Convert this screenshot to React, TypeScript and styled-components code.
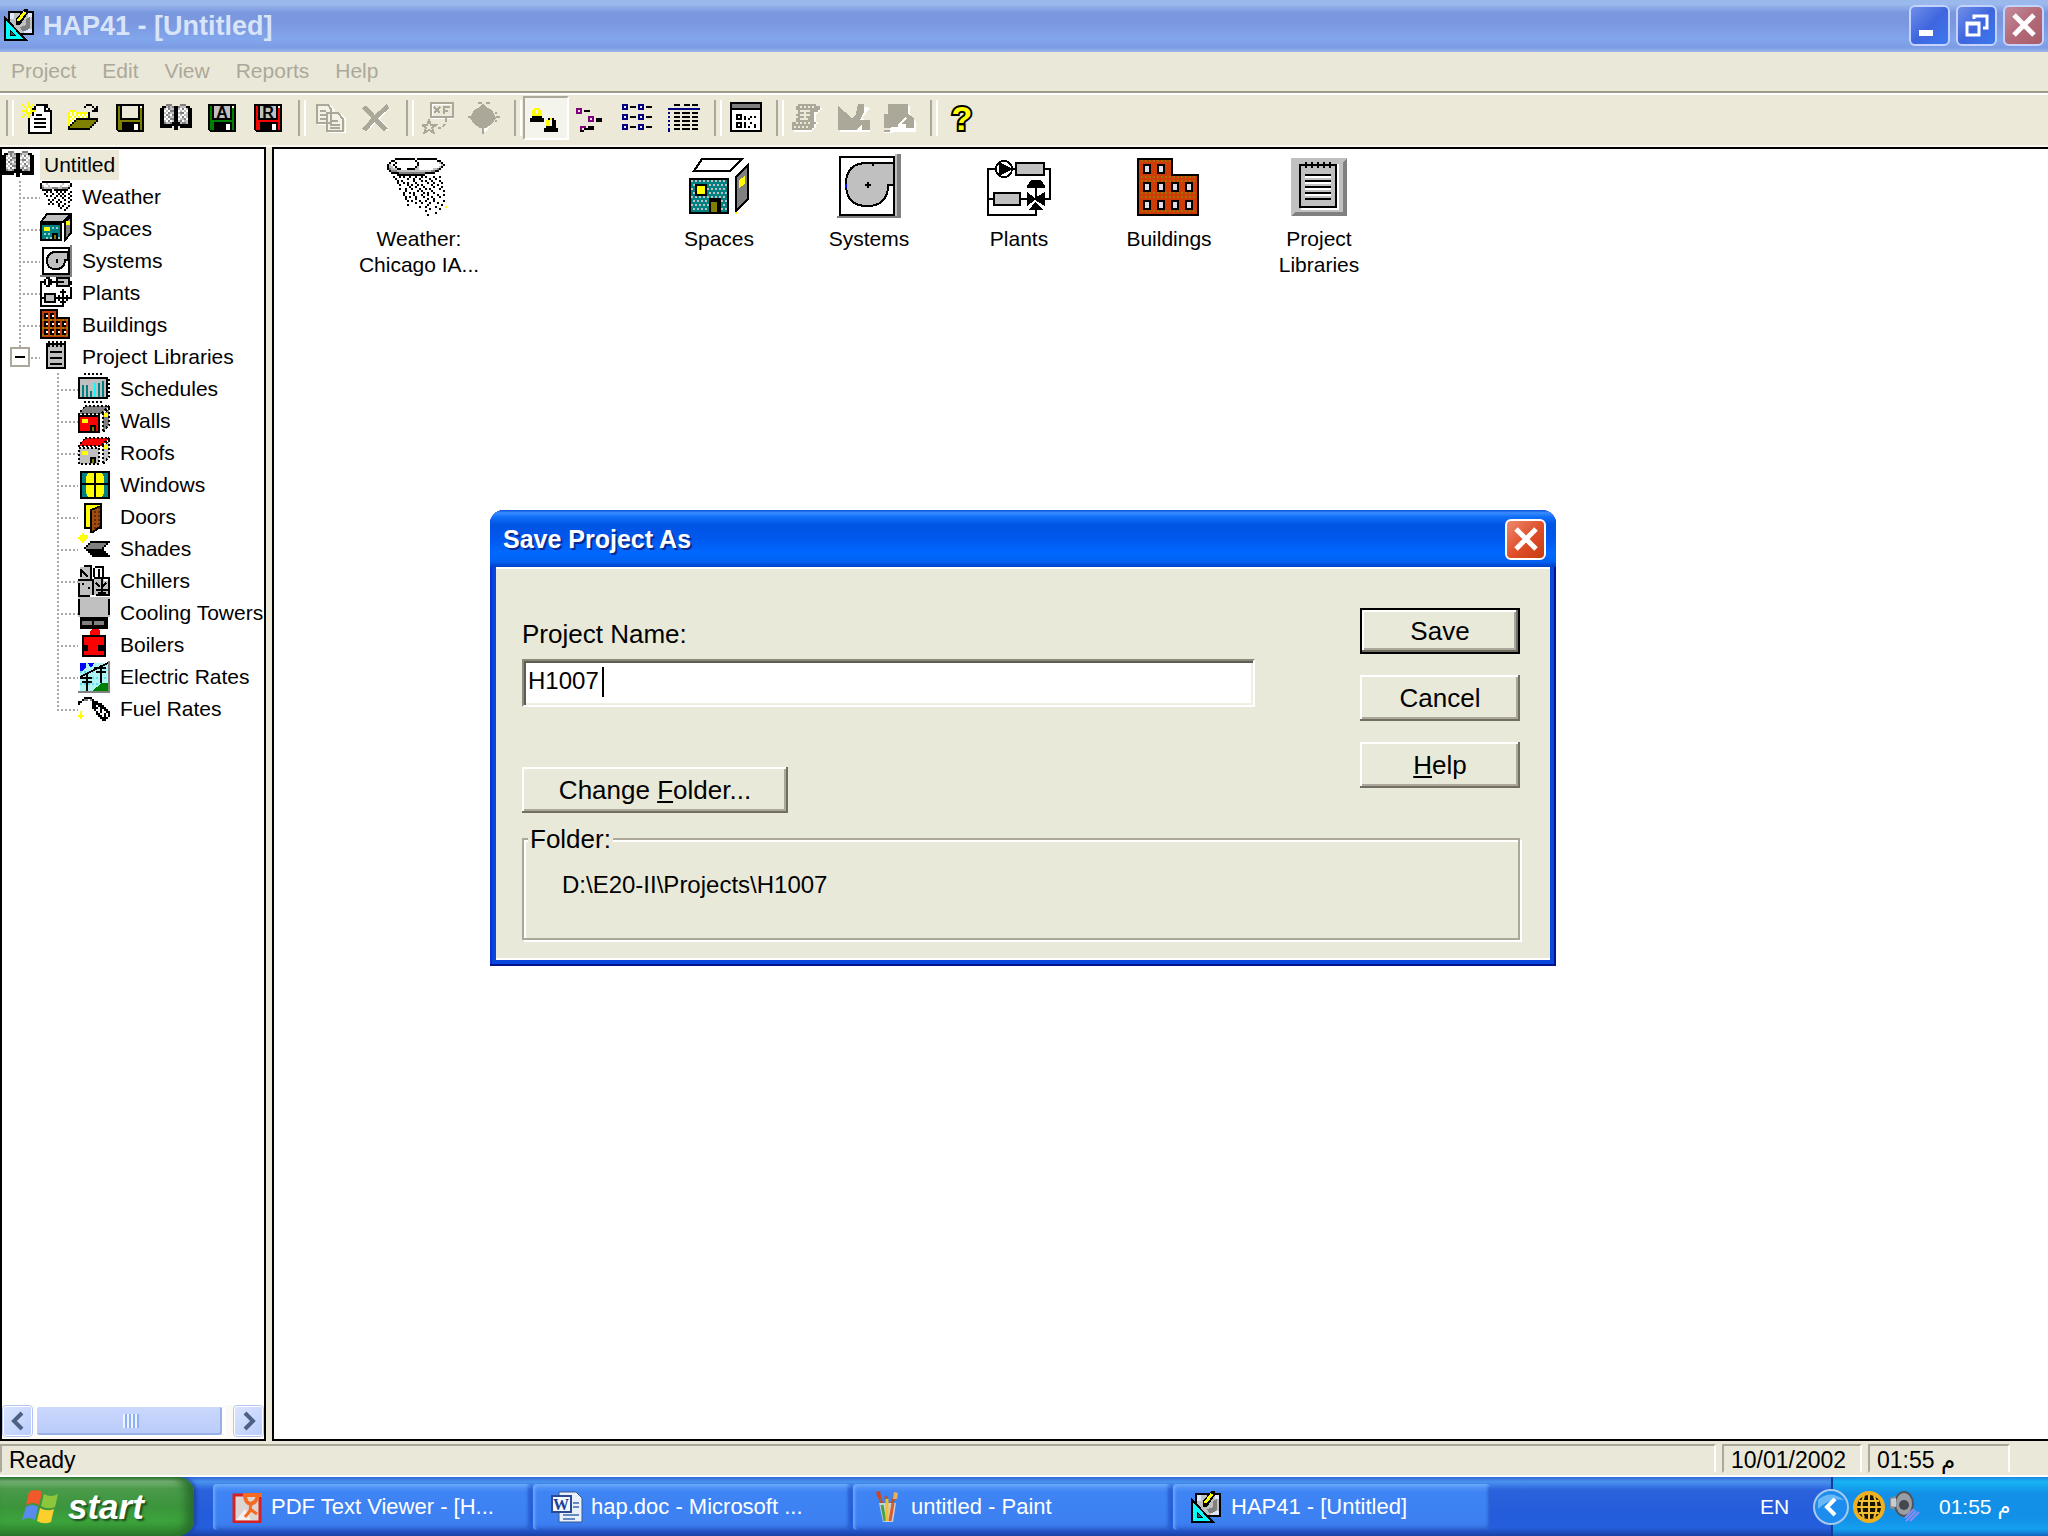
import React from "react";
import styled, { createGlobalStyle, css } from "styled-components";

const face = '#ece9d8';
const uiFont = '"Liberation Sans", "DejaVu Sans", Arial, sans-serif';

const GlobalStyle = createGlobalStyle`
  * { box-sizing: border-box; }
  body { margin: 0; background: ${face}; color: #000; font-family: ${uiFont}; }
  button { font: inherit; color: inherit; margin: 0; padding: 0; border: 0; background: none; }
  ul { list-style: none; margin: 0; padding: 0; }
  svg { display: block; flex: none; }
`;

/* ---------- drawing helpers ---------- */

const inks: Record<string, string> = {
  "#": "#000", w: "#fff", g: "#c0c0c0", d: "#808080", y: "#ff0", r: "#f00", t: "#008080",
  c: "#0ff", o: "#808000", G: "#008000", b: "#00f", n: "#000080", p: "#800080", s: "#aca899",
};

const Icon = ({ size = 32, box = 16, children }: { size?: number; box?: number; children: React.ReactNode }) => (
  <svg width={size} height={size} viewBox={`0 0 ${box} ${box}`} fill="none" aria-hidden="true" shapeRendering="crispEdges">
    {children}
  </svg>
);

const Pixels = ({ rows, top = 0 }: { rows: string[]; top?: number }) => (
  <>
    {rows.flatMap((row, y) =>
      Array.from(row.matchAll(/([^.])\1*/g)).map((run) => (
        <rect key={`${y}-${run.index}`} x={run.index} y={y + top} width={run[0].length} height={1} fill={inks[run[1]]} />
      ))
    )}
  </>
);

const bitmap = (rows: string[], top = 0) => <Icon><Pixels rows={rows} top={top} /></Icon>;

/* ---------- toolbar icons ---------- */

const AppIcon = ({ size = 32 }: { size?: number }) => (
  <Icon size={size}>
    <path d="M2 1H15V13H2Z" fill="#000" />
    <path d="M3 2H14V12H3Z" fill="#c0c0c0" />
    <path d="M3 2H5V5H3ZM12 2H14V4H12ZM10 10H14V12H10Z" fill="#dfe8ff" />
    <path d="M13 4V8Q13 11 9 11L8 9L11 8V5Z" fill="#808080" />
    <path d="M10 0H12V2L8 8H6V5Z" fill="#000" />
    <path d="M10.500 1.500L7 6" stroke="#ff0" strokeWidth="1.500" />
    <path d="M.5 4.500V15.500H11Z" fill="#0ff" stroke="#000" />
    <path d="M3 10.500V13H5.500Z" fill="#356" stroke="#000" strokeWidth=".5" />
  </Icon>
);

const newIcon = bitmap([
  "...y...........",
  "y..y.y.######..",
  ".y.yy.#wwww##..",
  "..ywy##wwww#w#.",
  "yyywyyywwww####",
  "..yyy#wwwwwwww#",
  ".y.y.#w###wwww#",
  "y..y.wwwwwwwww#",
  "...#ww######ww#",
  "...#wwwwwwwwww#",
  "...#ww######ww#",
  "...#wwwwwwwwww#",
  "...#ww######ww#",
  "...#wwwwwwwwww#",
  "...#wwwwwwwwww#",
  "...############",
]);
const openIcon = bitmap([
  ".........###....",
  "........#...#.#.",
  ".............##.",
  ".yyy........###.",
  "ywywyyyyyy#.....",
  "ywywywywyw#.....",
  "yywywywywy#.....",
  "ywyw###########.",
  "yyw#oooooooooo#.",
  "yw#oooooooooo#..",
  "y#oooooooooo#...",
  "#oooooooooo#....",
  "###########.....",
], 1);

const Floppy = ({ color, letter }: { color: string; letter?: string }) => (
  <Icon>
    <path d="M1 1H15V15H2L1 14Z" fill="#000" />
    <path d="M2 2H14V14H2Z" fill={color} />
    <path d="M3 1H13V9H3Z" fill="#000" />
    <path d="M4 2H12V8H4Z" fill={letter ? "#c0c0c0" : "#ece9d8"} />
    <path d="M13 2H14V3H13Z" fill="#fff" />
    <path d="M4 10H13V15H4Z" fill="#000" />
    <path d="M10 11H12V14H10Z" fill="#fff" />
    {letter && (
      <text x="8" y="8" fontSize="8" fontWeight="700" textAnchor="middle" fill="#000" fontFamily="Liberation Sans, sans-serif">
        {letter}
      </text>
    )}
  </Icon>
);

const bookIcon = bitmap([
  "...ddd....ddd...",
  ".##gdgd##dggg##.",
  "##gwdgg##gwdwg##",
  "##wgwdd##wgwgw##",
  "##gwdgg##gddwg##",
  "##wdgwd##wgwgg##",
  "##gwdgg##gwdwg##",
  "##wgwdd##wggdw##",
  "##gwdwg##gdwgg##",
  "##dggd####gddg##",
  "################",
  "######.##.######",
  ".......##.......",
], 1);

const copyIcon = (
  <Icon>
    <path d="M2 2H8L10 4V11H2ZM8 6H13L16 9V15H8Z" stroke="#fff" />
    <path d="M1.500 1.500H7L8.500 3.500V10.500H1.500ZM6.500 5.500H12L14.500 8.500V14.500H6.500Z" fill="#f4f2e6" stroke="#aca899" />
    <path d="M3 4.500H6M3 6.500H6M3 8.500H6M8 9.500H12M8 11.500H13M8 13H13" stroke="#aca899" />
  </Icon>
);
const deleteIcon = (
  <Icon>
    <path d="M3 3L14 14M14 3L3 14" stroke="#fff" strokeWidth="1.500" />
    <path d="M2 2.500L13 14M14 2L7.500 8L2 14" stroke="#aca899" strokeWidth="2.400" />
  </Icon>
);
const replaceIcon = (
  <Icon>
    <path d="M5 1H16V8H5Z" stroke="#fff" />
    <path d="M4.500 .5H15.500V7.500H4.500Z" stroke="#aca899" />
    <path d="M6 2.500L9 5.500M9 2.500L6 5.500M11 6V2.500H14M11 4.500H13" stroke="#aca899" />
    <path d="M12 8Q12 13 8 13" stroke="#aca899" strokeDasharray="2 1" />
    <path d="M3.500 9L4.500 11.500H7L5 13L6 15.500L3.500 14L1 15.500L2 13L0 11.500H2.500Z" stroke="#aca899" />
  </Icon>
);
const rotateIcon = (
  <Icon>
    <path d="M8 2L14 8L9 15L2 9Z" fill="#fff" />
    <path d="M7.500 1L10 3L12 4L14 8L12 11L9 13L6 13L3 11L1 8L3 4L5 3Z" fill="#aca899" />
    <path d="M5 .5H7M9 .5H11M0 7.500H2M14 7.500H16M7.500 13V16M14 5V6M14 9V10" stroke="#aca899" />
  </Icon>
);
const largeIcons = bitmap([
  "..yyy...........",
  ".yy.yy..........",
  ".yy.yy..........",
  ".yyyyy..........",
  ".#####..........",
  "#######..#y#....",
  "#######.yy.##...",
  "........yy.##...",
  "........yy.##...",
  "........#####...",
  ".......#######..",
  ".......#######..",
], 3);
const smallIcons = bitmap([
  "ppp.............",
  "p.p.###.........",
  "ppp.............",
  "................",
  "......ppp.......",
  "......p.p.###...",
  "......ppp.###...",
  "................",
  "................",
  "..ppp.###.......",
  "..p.#####.......",
  "..##............",
], 3);
const listIcon = (
  <Icon>
    {[2, 7, 12].map((y) => (
      <g key={y}>
        <path d={`M.5 ${y - 0.5}h2v2h-2zM8.500 ${y - 0.5}h2v2h-2z`} stroke="#000080" />
        <path d={`M4 ${y + 0.5}h3M12 ${y + 0.5}h3`} stroke="#000" />
      </g>
    ))}
  </Icon>
);
const detailsIcon = (
  <Icon>
    <path d="M3 1.500H6M8 1.500H11M12 1.500H15" stroke="#000" />
    <path d="M0 3.500H16M.5 5V15" stroke="#000080" />
    <path d="M0 6.500H1M0 8.500H1M0 10.500H1M0 12.500H1" stroke={face} />
    {[5.5, 7.5, 9.5, 11.5, 13.5].map((y) => <path key={y} d={`M3 ${y}H6M7 ${y}H11M12 ${y}H15`} stroke="#000" />)}
  </Icon>
);
const preferencesIcon = (
  <Icon>
    <path d="M.5 .5H15.500V14.500H.5Z" fill="#fff" stroke="#000" />
    <path d="M1 1H15V3H1Z" fill="#808080" />
    <path d="M1 3.500H15M3.500 6.500H5.500V8.500H3.500ZM3.500 10.500H5.500V12.500H3.500Z" stroke="#000" />
    <path d="M7.500 7V9M9 8.500H10M10.500 7V8M12 7.500H13M7.500 10V13M9 12.500H10M10 10.500H11M12 12.500H13M12.500 11V13" stroke="#000" />
  </Icon>
);
const reportIcon = bitmap([
  "...sssssssss....",
  "..ss.s.s.s.sss..",
  "..ssssssssssssw.",
  "...s.....ssssw..",
  "...sss.ssssww...",
  "..ss.....ssw....",
  "...sss.ssssw....",
  "..ss....sssw....",
  "..sssssssssw....",
  "ss.s.s.s.sssw...",
  "sssssssssssw....",
  "s.s.s.s.sssw....",
  "ssssssssssw.....",
  ".wwwwwwwww......",
], 1);
const chartIcon = (
  <Icon>
    <path d="M1 3L9 11L12 5V2L16 3L12 8L16 11V15H1Z" fill="#fff" />
    <path d="M0 2L7 8L9 6L10 1H13V5L11 9H16V14H12V11L9 14H0Z" fill="#aca899" />
  </Icon>
);
const printIcon = (
  <Icon>
    <path d="M3 2H13V7L16 10V15H3V10L0 11Z" fill="#fff" />
    <path d="M2 1H12V6L15 8V13H11V11H7V13H0V6H2Z" fill="#aca899" />
    <path d="M0 15H4V13H8V11L11 8" stroke="#fff" />
    <path d="M0 14.500H3" stroke="#aca899" />
  </Icon>
);
const helpIcon = (
  <Icon size={44} box={22}>
    <text x="11" y="17" fontSize="17" fontWeight="700" textAnchor="middle" fill="#ff0" stroke="#000" strokeWidth="2" paintOrder="stroke" fontFamily="Liberation Sans, sans-serif">?</text>
  </Icon>
);

/* ---------- project item icons ---------- */

const weatherIcon = bitmap([
  ".##############.",
  "#wwgwwwwwwwgwww#",
  "#gwwgwwwwwgwwwg#",
  "#dggggdddggddd#.",
  ".#####.#######..",
  "...#.#..#.#.#..#",
  "..#...#..#.#..#.",
  "...#.#..#.#.#..#",
  ".......#...#..#.",
  "....#.#..#..#..#",
  ".....#..#.#...#.",
  "....#.#..#..#...",
  ".........#.#..#.",
  "..........#..#..",
  "............#...",
]);

const SmallHouse = ({ wall, roof, side = "#808080", dashed }: { wall: string; roof: string; side?: string; dashed?: boolean }) => (
  <Icon>
    <path d="M3.500 .5H15.500L11.500 4.500H.5Z" fill={roof} stroke="#000" strokeDasharray={dashed ? "1 1" : undefined} />
    <path d="M12.500 4.500L15.500 1.500V10L12.500 13.500Z" fill={side} stroke="#000" strokeDasharray={dashed ? "1 1" : undefined} />
    <path d="M.5 5.500H10.500V13.500H.5Z" fill={wall} stroke="#000" strokeDasharray={wall === "#c0c0c0" ? "1 1" : undefined} />
    {wall === "#008080" && <path d="M2 7.500H10M2 10.500H10M3 12.500H10" stroke="#9cc" strokeDasharray="1 1" />}
    <path d="M2 7H5V9H2ZM13 4H15V6H13Z" fill="#ff0" />
    <path d="M6 10H9V13H6Z" fill="#000" />
    <path d="M7 11H8V13H7Z" fill="#808000" />
  </Icon>
);

const systemsSmall = (
  <Icon>
    <path d="M0 15.500H15.500V0" stroke="#808080" />
    <path d="M1.500 1.500H14.500V14.500H1.500Z" fill="#fff" stroke="#000" />
    <path d="M8 3.500H14V7.500H12.500Q12.500 12 8 12Q3.500 12 3.500 8Q3.500 3.500 8 3.500Z" fill="#c0c0c0" stroke="#000" />
    <path d="M8 7H9V9H8Z" fill="#000" />
  </Icon>
);
const plantsSmall = bitmap([
  "...##...#######.",
  "..#.##..#ggggg#.",
  "###.########gg##",
  "#.#.##..#ggggg##",
  "#..##...#######.",
  "#..............#",
  "#..........#...#",
  "#.........###..#",
  "#.######...#...#",
  "#.#gggg#.#.#.#.#",
  "###gggg#########",
  "#.#gggg#.#.#.#..",
  "#.######..###...",
  "#..........#....",
  "############....",
]);
const buildingsSmall = (
  <Icon>
    <path d="M.5 .5H8.500V4.500H14.500V14.500H.5Z" fill="#c43c04" stroke="#000" />
    <path d="M1 5.500H14M1 9.500H14M1 13H14" stroke="#a08000" strokeDasharray="1 1" />
    {[[2, 2], [5, 2], [2, 6], [5, 6], [8, 6], [11, 6], [2, 10], [5, 10], [8, 10], [11, 10]].map(([x, y]) => (
      <g key={`${x}-${y}`}>
        <path d={`M${x} ${y}h2v3h-2z`} fill="#000" />
        <path d={`M${x + 1} ${y + 1}h1v1h-1z`} fill="#fff" />
      </g>
    ))}
  </Icon>
);
const notepadSmall = (
  <Icon>
    <path d="M3.500 1.500H12.500V13.500H3.500Z" fill="#c0c0c0" stroke="#000" />
    <path d="M4.500 0V3M6.500 0V3M8.500 0V3M10.500 0V3M12.500 0V3M5 5.500H11M5 8.500H11M5 11.500H11" stroke="#000" />
  </Icon>
);
const schedulesIcon = (
  <Icon>
    <path d="M3 .5H13M3 14.500H13" stroke="#000" strokeDasharray="1 1" />
    <path d="M.5 2.500H14.500V12.500H.5Z" fill="#c0c0c0" stroke="#000" />
    <path d="M15.500 3V12" stroke="#000" strokeDasharray="1 1" />
    <path d="M2.500 6V12M4.500 6V12M6.500 9V12M12.500 4V12M10.500 5V12" stroke="#008080" />
    <path d="M8.500 5V12" stroke="#0ff" />
  </Icon>
);
const windowsIcon = (
  <Icon>
    <path d="M1.500 1.500H15.500V14.500H1.500Z" fill="#008080" stroke="#000" />
    <path d="M5 2H8V7H4V4ZM9 2H12L13 4V7H9ZM4 8H8V14H5L4 12ZM9 8H13V12L12 14H9Z" fill="#ff0" />
    <path d="M8.500 1V15M1 7.500H16" stroke="#000" />
  </Icon>
);
const doorsIcon = (
  <Icon>
    <path d="M3.500 1.500H11.500V13.500H3.500Z" fill="#ff0" stroke="#000" />
    <path d="M6.500 4.500L11.500 2.500V12.500L7.500 15.500H6.500Z" fill="#a04c10" stroke="#000" />
    <path d="M8.500 5V14M10.500 3V12" stroke="#602c00" strokeDasharray="1 1" />
  </Icon>
);
const shadesIcon = bitmap([
  "..y.............",
  ".yyyy...........",
  "yyyyy...........",
  ".yyy............",
  "..y...##########",
  ".....#dddddddd#.",
  "....#dddddddd#..",
  "...#dddddddd#...",
  "....#########...",
  ".....#########..",
  "......#########.",
  ".......#########",
]);
const chillersIcon = (
  <Icon>
    <path d="M1 1H7V7H13V8H15V15H0V8H1Z" fill="#c0c0c0" />
    <path d="M1.500 2V6M3 .5H6.500V7M2 3L5 6M8.500 1H12.500V7M10.500 2V6M8 1.500V6M0 7.500H7M.5 9V15M7.500 7V15M0 15.500H6M8 6.500H15.500V15H9M9 9L11 11M14 9L12 11M12 7V15M9 12.500H15M10 14H14" stroke="#000" />
    <path d="M5 11H6V12H5ZM2 9H3V10H2Z" fill="#000" />
  </Icon>
);
const towersIcon = (
  <Icon>
    <path d="M0 0H16V10H0Z" fill="#c0c0c0" />
    <path d="M.5 1V9M15.500 1V9M1 10.500H15" stroke="#000" />
    <path d="M1 11H15V16H1Z" fill="#000" />
    <path d="M2 12H7V14H2ZM8 12H13V14H8Z" fill="#808080" />
  </Icon>
);
const boilersIcon = (
  <Icon>
    <path d="M6 1L7 0H10L11 1V3H6Z" fill="#f00" />
    <path d="M2.500 3.500H13.500V13.500H2.500Z" fill="#f00" stroke="#000" />
    <path d="M3 8H5V11H3ZM10 8H13V11H10Z" fill="#000" />
  </Icon>
);
const electricIcon = (
  <Icon>
    <path d="M1 1H15V15H1Z" fill="#aef4f4" />
    <path d="M1 5.500H14M1 8.500H14M1 11.500H14" stroke="#5de0e8" strokeDasharray="1 1" />
    <path d="M1 1H4V3L2 5H1ZM5 1H8L7 3H6Z" fill="#00f" />
    <path d="M7 15L12 11H15V15Z" fill="#008000" />
    <path d="M1 8L5 6L15 1M1 8.500H7M2 10.500H7M4.500 6V15M8 3.500H14M9 5.500H14M11.500 2V11" stroke="#000" />
    <path d="M0 15.500H15.500V0" stroke="#808080" />
  </Icon>
);
const fuelIcon = bitmap([
  "...####.........",
  "..#dd.d#........",
  "##.....###......",
  "#......#####....",
  ".......##w###...",
  ".......###w###..",
  "........#ww#w##.",
  ".y.......#w#ww##",
  ".y.......##ww#w#",
  "yyy.......##w#w#",
  ".y.........####.",
  "............##..",
], 2);

const Large = ({ children }: { children: React.ReactNode }) => <Icon size={64} box={32}>{children}</Icon>;

const weatherLarge = (
  <Large>
    <Pixels
      top={2}
      rows={[
        "....##########.##########.......",
        "..##wwwwwwwwww#wwwwwwwwww##.....",
        ".#ww#wwwwwwwwww#wwwwwwwwwwg#....",
        "#gw#wwwwwwwwwww#wwwwwwwwwwwg#...",
        "#ggw#wwwwwwwww#gwwwwwwwwwwg#....",
        "#dggg##www####ggwwwwwwwggd#.....",
        ".#dddgggggggggggggggggdd##......",
        "..####ddddddddddddd#####........",
        ".....##############.............",
        "...#..#.#..#..#..#.#...#..#.....",
        "....#.....#..#..#....#..#.......",
        ".....#.#.....#...#.#..#...#.....",
        ".....#..#.#...#.....#..#...#....",
        "......#...#.#..#.#....#..#......",
        "...........#..#...#....#...#....",
        "......#..#..#...#..#.#....#.....",
        ".........#.....#.#....#.....#...",
        "........#..#.#....#.#..#........",
        "........#....#...#..#....#..#...",
        ".........#.#..#...#...#...#.....",
        ".........#....#.....#..#........",
        "..........#.#...#..#...#....#...",
        "..............#..#...#...#......",
        "..........#.........#......#....",
        "................#..#....#....y..",
        ".....................#....#.....",
        "...................#............",
        "........................#.......",
        "....................#...........",
      ]}
    />
  </Large>
);
const spacesLarge = (
  <Large>
    <path d="M7.500 2.500H27.500L21.500 8.500H3.500Z" fill="#fff" stroke="#000" />
    <path d="M24.500 11.500L30.500 5.500V22.500L24.500 28.500Z" fill="#808080" stroke="#000" />
    <path d="M26 13L29 11V15L26 17Z" fill="#ff0" />
    <path d="M1.500 12.500H20.500V29.500H1.500Z" fill="#008080" stroke="#000" />
    {[14, 16, 18, 20, 22, 24, 26, 28].map((y) => (
      <path key={y} d={`M${y % 4 ? 2 : 3} ${y - 0.5}H20`} stroke="#c0c0c0" strokeDasharray="1 1" />
    ))}
    <path d="M4.500 15.500H9.500V20.500H4.500Z" fill="#ff0" stroke="#000" />
    <path d="M11 22H17V29H11Z" fill="#000" />
    <path d="M12 24H15V29H12Z" fill="#808000" />
    <path d="M24 29H25V30H24Z" fill="#ff0" />
  </Large>
);
const systemsLarge = (
  <Large>
    <path d="M0 32V31H30V0H32V32Z" fill="#808080" />
    <path d="M29 0H30V31H29Z" fill="#c0c0c0" />
    <path d="M1.500 1.500H28.500V30.500H1.500Z" fill="#fff" stroke="#000" />
    <path d="M15 4.500H28.500V15.500H25.500Q25.500 26 15 26Q4.500 26 4.500 15Q4.500 4.500 15 4.500Z" fill="#c0c0c0" stroke="#000" />
    <path d="M28.500 5V16M14 15.500H17M15.500 14V17M18 5V6" stroke="#000" />
    <path d="M4 15H5V17H4Z" fill="#00f" />
  </Large>
);
const plantsLarge = (
  <Large>
    <path d="M4 7.500H.5V30.500H24.500V26M28 7.500H31.500V22.500H28M12 7.500H15M.5 22.500H4M16 22.500H20M24.500 17V22" stroke="#000" />
    <path d="M14.500 4.500H28.500V10.500H14.500ZM3.500 19.500H16.500V25.500H3.500Z" fill="#c0c0c0" stroke="#000" />
    <circle cx="8.500" cy="7.500" r="4" fill="#fff" stroke="#000" />
    <path d="M6 4L13 7.500L6 11Z" fill="#000" />
    <path d="M20 17V16L22 13H27L29 16V17ZM20 19L24 22L29 19V26L24 23L20 26ZM21 28L24 24L28 28Z" fill="#000" />
  </Large>
);
const buildingsLarge = (
  <Large>
    <path d="M.5 2.500H17.500V10.500H30.500V30.500H.5Z" fill="#d03c08" stroke="#000" />
    {[4, 12, 14, 20, 22, 29].map((y) => (
      <path key={y} d={`M2 ${y - 0.5}H${y < 10 ? 17 : 30}`} stroke="#a07000" strokeDasharray="1 1" />
    ))}
    {[3, 10, 17, 24].flatMap((x) =>
      [5, 14, 23].filter((y) => y > 5 || x < 12).map((y) => (
        <path key={`${x}-${y}`} d={`M${x + 0.5} ${y + 0.5}h3v4h-3z`} fill="#dfe0ea" stroke="#000" />
      ))
    )}
  </Large>
);
const librariesLarge = (
  <Large>
    <path d="M2 2H30V31H2Z" fill="#c0c0c0" />
    <path d="M2 31L4 29H28V4L30 2V31Z" fill="#808080" />
    <path d="M7 5H26V28H7Z" fill="#fff" />
    <path d="M6.500 5.500H24.500V26.500H6.500Z" fill="#c0c0c0" stroke="#000" />
    <path d="M9.500 4V7M12.500 4V7M15.500 4V7M18.500 4V7M21.500 4V7M9 10.500H22M9 13.500H22M9 16.500H22M9 19.500H22M9 22.500H22" stroke="#000" />
    <path d="M9 11.500H22M9 14.500H22M9 17.500H22M9 20.500H22" stroke="#fff" />
  </Large>
);

/* ---------- title bar ---------- */

const Screen = styled.div`
  min-height: 100vh;
  display: flex;
  flex-direction: column;
`;

const AppWindow = styled.main`
  flex: 1;
  position: relative;
  display: flex;
  flex-direction: column;
  background: ${face};
`;

const TitleBar = styled.header`
  height: 52px;
  display: flex;
  align-items: center;
  gap: 7px;
  padding: 0 4px 2px;
  background: linear-gradient(#9bb8ec 0, #9ab9ec 8%, #7a98de 24%, #7b97e0 45%, #82a6ec 75%, #7c9ce4 92%, #a0b8e8 100%);
  color: #d8e4f8;
`;

const Title = styled.h1`
  margin: 0;
  padding-top: 2px;
  flex: 1;
  font: 700 27px/36px ${uiFont};
`;

const Caption = styled.div`
  display: flex;
  gap: 6px;
`;

const CaptionButton = styled.button<{ $tone: "blue" | "faded" | "red" }>`
  width: 41px;
  height: 41px;
  display: grid;
  place-items: center;
  border: 2px solid ${(p) => (p.$tone === "red" ? "#fff" : "#c3d3fd")};
  border-radius: 6px;
  ${(p) =>
    p.$tone === "blue"
      ? "background: linear-gradient(135deg, #6f8fe8, #3f66de 50%, #3c78ee);"
      : p.$tone === "faded"
      ? "background: linear-gradient(135deg, #c28a9c, #b36a78 50%, #a85c68);"
      : "background: linear-gradient(135deg, #ee8a70, #e0512c 50%, #c83a10);"}
`;

const Glyph = ({ d, width = 4 }: { d: string; width?: number }) => (
  <svg width="28" height="28" viewBox="0 0 28 28" fill="none" stroke="#fff" strokeWidth={width} aria-hidden="true">
    <path d={d} />
  </svg>
);

const crossPath = "M4 4L24 24M24 4L4 24";

/* ---------- menu and toolbar ---------- */

const MenuBar = styled.nav`
  height: 39px;
  display: flex;
  align-items: center;
  gap: 26px;
  padding: 0 11px 2px;
  background: #eae9d9;
  font: 21px/28px ${uiFont};
  color: #aca899;
`;

const ToolBar = styled.div`
  height: 56px;
  display: flex;
  align-items: flex-start;
  padding: 3px 6px 0;
  border-top: 2px solid #9d9a8a;
  border-bottom: 2px solid #f8f7f0;
  box-shadow: inset 0 2px #fff;
`;

const Divider = styled.span<{ $first?: boolean }>`
  width: ${(p) => (p.$first ? 9 : 16)}px;
  height: 36px;
  margin-top: 4px;
  ${(p) => (p.$first ? "" : "padding-left: 7px;")}
  &::before {
    content: "";
    display: block;
    width: 4px;
    height: 100%;
    border-left: 2px solid #aca899;
    border-right: 2px solid #fff;
  }
`;

const ToolButton = styled.button<{ $pressed?: boolean }>`
  width: 46px;
  height: 44px;
  display: grid;
  place-items: center;
  ${(p) =>
    p.$pressed &&
    css`
      background: #f5f4ec;
      border: 2px solid;
      border-color: #aca899 #fff #fff #aca899;
    `}
`;

type Tool = { label: string; icon: React.ReactNode; pressed?: boolean; off?: boolean };
const toolGroups: Tool[][] = [
  [
    { label: "New", icon: newIcon },
    { label: "Open", icon: openIcon },
    { label: "Save", icon: <Floppy color="#808000" /> },
    { label: "Library", icon: bookIcon },
    { label: "Archive", icon: <Floppy color="#008000" letter="A" /> },
    { label: "Retrieve", icon: <Floppy color="#f00" letter="R" /> },
  ],
  [
    { label: "Copy", icon: copyIcon, off: true },
    { label: "Delete", icon: deleteIcon, off: true },
  ],
  [
    { label: "Replace", icon: replaceIcon, off: true },
    { label: "Rotate", icon: rotateIcon, off: true },
  ],
  [
    { label: "Large icons", icon: largeIcons, pressed: true },
    { label: "Small icons", icon: smallIcons },
    { label: "List", icon: listIcon },
    { label: "Details", icon: detailsIcon },
  ],
  [{ label: "Preferences", icon: preferencesIcon }],
  [
    { label: "Input report", icon: reportIcon, off: true },
    { label: "Design report", icon: chartIcon, off: true },
    { label: "Print", icon: printIcon, off: true },
  ],
  [{ label: "Help", icon: helpIcon }],
];

/* ---------- panes ---------- */

const Panes = styled.div`
  flex: 1;
  display: grid;
  grid-template-columns: 266px minmax(0, 1fr);
  gap: 6px;
  min-height: 0;
`;

const Pane = styled.section`
  display: flex;
  flex-direction: column;
  overflow: hidden;
  background: #fff;
  border: 2px solid #000;
`;

const TreePane = styled(Pane)`
  font: 21px/32px ${uiFont};
`;

const ContentPane = styled(Pane)`
  border-right: 0;
`;

const TreeArea = styled.div`
  flex: 1;
  overflow: hidden;
  white-space: nowrap;
`;

const dots = (dir: string) => `repeating-linear-gradient(to ${dir}, #a8a8a8 0 2px, transparent 2px 4px)`;

const Branch = styled.ul<{ $deep?: boolean }>`
  padding-left: ${(p) => (p.$deep ? 38 : 0)}px;
`;

const Row = styled.div`
  height: 32px;
  display: flex;
  align-items: center;
`;

const Guide = styled.span<{ $last?: boolean }>`
  width: 38px;
  height: 32px;
  flex: none;
  display: flex;
  align-items: center;
  padding-left: 8px;
  background: ${dots("bottom")} 17px 0 / 2px ${(p) => (p.$last ? "16px" : "100%")} no-repeat,
    ${dots("right")} 17px 16px / 21px 2px no-repeat;
`;

const Expander = styled.button`
  width: 20px;
  height: 20px;
  display: grid;
  place-items: center;
  background: #fff;
  border: 2px solid #aca899;
  &::before {
    content: "";
    width: 10px;
    height: 2px;
    background: #000;
  }
`;

const NodeLabel = styled.button<{ $selected?: boolean }>`
  height: 30px;
  line-height: 30px;
  margin-left: 6px;
  padding: 0 4px;
  background: ${(p) => (p.$selected ? face : "transparent")};
`;

const rootItems: [string, React.ReactNode][] = [
  ["Weather", weatherIcon],
  ["Spaces", <SmallHouse wall="#008080" roof="#c0c0c0" />],
  ["Systems", systemsSmall],
  ["Plants", plantsSmall],
  ["Buildings", buildingsSmall],
];
const libraryItems: [string, React.ReactNode][] = [
  ["Schedules", schedulesIcon],
  ["Walls", <SmallHouse wall="#ff0000" roof="#808080" dashed />],
  ["Roofs", <SmallHouse wall="#c0c0c0" roof="#ff0000" side="#c0c0c0" dashed />],
  ["Windows", windowsIcon],
  ["Doors", doorsIcon],
  ["Shades", shadesIcon],
  ["Chillers", chillersIcon],
  ["Cooling Towers", towersIcon],
  ["Boilers", boilersIcon],
  ["Electric Rates", electricIcon],
  ["Fuel Rates", fuelIcon],
];

const TreeNode = ({ name, icon, last }: { name: string; icon: React.ReactNode; last?: boolean }) => (
  <li>
    <Row>
      <Guide $last={last} />
      {icon}
      <NodeLabel type="button">{name}</NodeLabel>
    </Row>
  </li>
);

const ScrollBar = styled.div`
  height: 34px;
  display: flex;
  gap: 2px;
  padding-bottom: 2px;
  background: #fbfaf6;
`;

const ScrollArrow = styled.button`
  width: 31px;
  display: grid;
  place-items: center;
  border-radius: 4px;
  border: 2px solid #fff;
  outline: 1px solid #b4c6f0;
  outline-offset: -1px;
  background: linear-gradient(135deg, #dbe4fe, #b9cdfb);
`;

const ScrollThumb = styled.div`
  width: 191px;
  display: flex;
  align-items: center;
  justify-content: center;
  border-radius: 4px;
  border: 2px solid #fff;
  box-shadow: inset -2px 0 #fff, inset -4px -2px #98b0e8;
  background: linear-gradient(#cbd8fe, #b9cbf8);
`;

const ThumbGrip = styled.span`
  width: 16px;
  height: 14px;
  background: repeating-linear-gradient(to right, #eef4fe 0 2px, #8cb0f8 2px 4px);
`;

const ScrollGap = styled.span`
  flex: 1;
`;

const IconGrid = styled.div`
  display: grid;
  grid-template-columns: repeat(auto-fill, 150px);
  padding: 5px 0 0 70px;
  font: 21px/26px ${uiFont};
`;

const ProjectItem = styled.button<{ $column: number }>`
  grid-column: ${(p) => p.$column};
  display: flex;
  flex-direction: column;
  align-items: center;
  align-self: start;
  gap: 8px;
`;

const ItemLabel = styled.span`
  white-space: pre-line;
  text-align: center;
`;

const projectItems: [string, React.ReactNode][] = [
  ["Weather:\nChicago IA...", weatherLarge],
  ["Spaces", spacesLarge],
  ["Systems", systemsLarge],
  ["Plants", plantsLarge],
  ["Buildings", buildingsLarge],
  ["Project\nLibraries", librariesLarge],
];

/* ---------- status bar ---------- */

const StatusBar = styled.footer`
  height: 36px;
  display: flex;
  gap: 6px;
  padding: 3px 38px 2px 0;
  background: #eae9d9;
  border-bottom: 2px solid #fff;
  font: 23px/28px ${uiFont};
`;

const StatusPanel = styled.span<{ $width?: number }>`
  ${(p) => (p.$width ? `width: ${p.$width}px;` : "flex: 1;")}
  padding-left: 7px;
  border: 2px solid;
  border-color: #aca899 #fff transparent #aca899;
`;

/* ---------- dialog ---------- */

const DialogLayer = styled.div`
  position: absolute;
  inset: 0;
  display: flex;
  align-items: center;
  justify-content: center;
  padding: 0 2px 2px 0;
`;

const DialogFrame = styled.form`
  width: 1066px;
  padding: 0 6px 6px;
  border-radius: 14px 14px 0 0;
  background: #0a46dc;
  box-shadow: inset -2px -2px #00138c, inset 2px 0 #0831d9;
  overflow: hidden;
`;

const DialogTitle = styled.div`
  height: 57px;
  margin: 0 -6px;
  display: flex;
  align-items: center;
  justify-content: space-between;
  padding: 2px 10px 0 13px;
  background: linear-gradient(#0a50d8 0, #3a8cff 5%, #1070f8 12%, #0054e3 26%, #0058ee 50%, #0068ff 75%, #0062f4 90%, #0040c8 100%);
  color: #fff;
`;

const DialogHeading = styled.h2`
  margin: 0;
  font: 700 25px/32px ${uiFont};
  text-shadow: 2px 2px #0a2a90;
`;

const DialogBody = styled.div`
  display: grid;
  grid-template-columns: 733px 160px;
  justify-content: space-between;
  padding: 39px 30px 18px 26px;
  background: #e9e9d9;
  border: 2px solid #fff;
  border-width: 2px 0;
  font: 26px/32px ${uiFont};
`;

const Fields = styled.div`
  display: flex;
  flex-direction: column;
  align-items: flex-start;
  padding-top: 10px;
`;

const NameField = styled.div`
  position: relative;
  width: 100%;
  margin: 9px 0 60px;
`;

const NameInput = styled.input`
  display: block;
  width: 100%;
  height: 48px;
  padding: 0 4px 4px;
  border: 2px solid;
  border-color: #8c8a7c #fff #fff #8c8a7c;
  box-shadow: inset 2px 2px #5f5d52, inset -2px -2px #f1efe2;
  outline: 0;
  background: #fff;
  font: 24px/32px ${uiFont};
  caret-color: transparent;
`;

const Caret = styled.span`
  position: absolute;
  left: 80px;
  top: 8px;
  width: 2px;
  height: 30px;
  background: #000;
`;

const PushButton = styled.button<{ $primary?: boolean }>`
  height: 46px;
  background: #e9e9d9;
  ${(p) => p.$primary && "border: 2px solid #000;"}
  box-shadow: inset -2px -2px #716f64, inset 2px 2px #fff, inset -4px -4px #aca899;
`;

const WideButton = styled(PushButton)`
  width: 266px;
`;

const Actions = styled.div`
  display: flex;
  flex-direction: column;
  gap: 21px;
`;

const FolderGroup = styled.fieldset`
  grid-column: 1 / -1;
  min-width: 0;
  margin: 10px 0 0;
  padding: 14px 38px 37px;
  border: 2px solid #aca899;
  box-shadow: 2px 2px #fff, inset 2px 2px #fff;
`;

const FolderLegend = styled.legend`
  margin-left: -34px;
  padding: 0 2px;
  background: #e9e9d9;
`;

const FolderPath = styled.output`
  display: block;
  font-size: 24px;
`;

/* ---------- taskbar ---------- */

const TaskBar = styled.footer`
  height: 59px;
  display: flex;
  align-items: stretch;
  background: linear-gradient(#3168d5 0, #4993ee 8%, #2b62dc 22%, #245ddb 60%, #245edc 86%, #1941a5 100%);
  color: #fff;
  font: 22px/28px ${uiFont};
`;

const StartButton = styled.button`
  width: 194px;
  display: flex;
  align-items: center;
  gap: 8px;
  padding-left: 22px;
  border-radius: 0 16px 16px 0;
  background: linear-gradient(#2f7a35 0, #7db77c 7%, #4a9a4a 20%, #3c953c 50%, #3ba43b 75%, #2d7f2d 100%);
  box-shadow: inset -8px 0 10px #2a6e2c, 2px 0 4px #1c3f9c;
  font: italic 700 35px/44px ${uiFont};
  text-shadow: 2px 2px 2px #1c4a1c;
`;

const Tasks = styled.div`
  flex: 1;
  display: flex;
  gap: 3px;
  padding: 7px 0 6px 19px;
`;

const TaskButton = styled.button`
  width: 317px;
  display: flex;
  align-items: center;
  gap: 8px;
  padding-left: 18px;
  border-radius: 4px;
  background: linear-gradient(#5a9bf8 0, #3f84f4 18%, #3c80f2 80%, #3a76e8 100%);
  box-shadow: inset 2px 2px 3px #6aa8fa, inset -2px -2px 3px #2a5cc8;
`;

const Language = styled.button`
  width: 88px;
  display: flex;
  align-items: center;
  padding-left: 17px;
  font-size: 21px;
`;

const Tray = styled.div`
  display: flex;
  align-items: center;
  gap: 2px;
  width: 217px;
  background: linear-gradient(#1a8ae0 0, #18b4f4 8%, #1290e8 28%, #1290e8 70%, #14a0f0 88%, #1266c0 100%);
  border-left: 2px solid #0d4090;
`;

const TrayToggle = styled.button`
  margin-left: -21px;
`;

const Clock = styled.time`
  margin-left: 15px;
  font-size: 21px;
`;

const FlagLogo = () => (
  <svg width="38" height="40" viewBox="0 0 38 40" aria-hidden="true">
    <path d="M7 5Q13 1 20 5L17 18Q11 14 4 18Z" fill="#f2582a" />
    <path d="M22 7Q29 11 36 7L33 20Q26 23 19 19Z" fill="#8cc63c" />
    <path d="M4 20Q10 16 16 20L13 33Q7 29 0 33Z" fill="#5a8cf0" />
    <path d="M18 21Q25 25 32 22L29 35Q22 38 15 34Z" fill="#fbcf2c" />
  </svg>
);

const PdfIcon = () => (
  <svg width="32" height="32" viewBox="0 0 32 32" aria-hidden="true">
    <path d="M3 4H29V31H3Z" fill="#ddd4d4" stroke="#d82020" strokeWidth="3" />
    <path d="M5 29L14 18L20 29Z" fill="#f4f0f0" />
    <path d="M12 4H31M14 4C14 16 25 15 27 4" fill="none" stroke="#f46a20" strokeWidth="4" />
    <path d="M20 12L19 20L14 26M19 18L26 23" fill="none" stroke="#f46a20" strokeWidth="3" />
  </svg>
);

const WordIcon = () => (
  <svg width="32" height="32" viewBox="0 0 32 32" aria-hidden="true">
    <path d="M8 1H25L31 7V31H8Z" fill="#e8f0fc" stroke="#39588c" />
    <path d="M22 12H28M22 16H28M12 24H28M12 28H24" stroke="#6888c0" strokeWidth="2" />
    <path d="M1 5H20V21H1Z" fill="#f4f8ff" stroke="#2a4a98" strokeWidth="2" />
    <text x="10" y="19" fontSize="16" fontWeight="700" textAnchor="middle" fill="#1f3f94" fontFamily="Liberation Serif, serif">W</text>
  </svg>
);

const PaintIcon = () => (
  <svg width="32" height="32" viewBox="0 0 32 32" aria-hidden="true">
    <path d="M12 16L7 2M16 16L15 5M19 16L25 3" stroke="#b8562c" strokeWidth="3" />
    <path d="M5 1L9 0L10 6L7 7Z" fill="#d8401c" />
    <path d="M23 1L27 2L26 8L22 8Z" fill="#e8b060" />
    <path d="M8 12H25L22 31H12Z" fill="#c8d0d8" />
    <path d="M11 14L14 30" stroke="#4aa04a" strokeWidth="3" />
    <path d="M16 8V30" stroke="#f0c030" strokeWidth="3" />
    <path d="M22 12L19 30" stroke="#e0582c" strokeWidth="3" />
  </svg>
);

const ChevronBadge = () => (
  <svg width="38" height="40" viewBox="0 0 38 40" aria-hidden="true">
    <circle cx="19" cy="20" r="17" fill="#1c8cee" stroke="#a8c8ec" strokeWidth="2" />
    <path d="M6 13Q18 2 32 13Q18 10 6 22Z" fill="#6ab8f8" />
    <path d="M23 12L15 20L23 28" fill="none" stroke="#fff" strokeWidth="4" />
  </svg>
);

const GlobeBadge = () => (
  <svg width="34" height="34" viewBox="0 0 34 34" aria-hidden="true">
    <circle cx="17" cy="17" r="16" fill="#f0b020" />
    <circle cx="17" cy="17" r="12" fill="#181400" />
    <path d="M17 5V29M5 17H29M7 11H27M7 23H27M12 6Q7 17 12 28M22 6Q27 17 22 28" fill="none" stroke="#f0c030" strokeWidth="2" />
  </svg>
);

const SpeakerBadge = () => (
  <svg width="34" height="34" viewBox="0 0 34 34" aria-hidden="true">
    <path d="M2 8L8 6L16 2L22 8V20L16 26L8 20L2 18Z" fill="#8a8e94" />
    <ellipse cx="16" cy="14" rx="9" ry="12" fill="#9a9ea4" stroke="#505458" strokeWidth="2" />
    <circle cx="16" cy="15" r="5" fill="#44484e" />
    <path d="M3 9L8 8V17L3 16Z" fill="#c8ccd2" />
    <path d="M18 31L28 21M22 31L31 22M17 28L26 19" stroke="#8c8cf0" strokeWidth="2" />
  </svg>
);

const tasks: [string, React.ReactNode][] = [
  ["PDF Text Viewer - [H...", <PdfIcon />],
  ["hap.doc - Microsoft ...", <WordIcon />],
  ["untitled - Paint", <PaintIcon />],
  ["HAP41 - [Untitled]", <AppIcon />],
];

export default function App() {
  return (
    <Screen>
      <GlobalStyle />
      <AppWindow>
        <TitleBar>
          <AppIcon />
          <Title>HAP41 - [Untitled]</Title>
          <Caption>
            <CaptionButton $tone="blue" aria-label="Minimize"><Glyph d="M3 22H17" width={6} /></CaptionButton>
            <CaptionButton $tone="blue" aria-label="Restore"><Glyph d="M4 12H16V24H4ZM4 13H16M11 8V5H24V17H20" width={3} /></CaptionButton>
            <CaptionButton $tone="faded" aria-label="Close"><Glyph d={crossPath} width={5} /></CaptionButton>
          </Caption>
        </TitleBar>

        <MenuBar>
          {["Project", "Edit", "View", "Reports", "Help"].map((m) => <button key={m} type="button">{m}</button>)}
        </MenuBar>

        <ToolBar role="toolbar">
          {toolGroups.map((group, i) => (
            <React.Fragment key={i}>
              <Divider $first={i === 0} />
              {group.map((t) => (
                <ToolButton key={t.label} type="button" aria-label={t.label} $pressed={t.pressed} disabled={t.off}>
                  {t.icon}
                </ToolButton>
              ))}
            </React.Fragment>
          ))}
        </ToolBar>

        <Panes>
          <TreePane>
            <TreeArea>
              <Row>
                {bookIcon}
                <NodeLabel type="button" $selected>Untitled</NodeLabel>
              </Row>
              <Branch>
                {rootItems.map(([name, icon]) => <TreeNode key={name} name={name} icon={icon} />)}
                <li>
                  <Row>
                    <Guide $last><Expander type="button" aria-label="Collapse Project Libraries" /></Guide>
                    {notepadSmall}
                    <NodeLabel type="button">Project Libraries</NodeLabel>
                  </Row>
                  <Branch $deep>
                    {libraryItems.map(([name, icon], i) => (
                      <TreeNode key={name} name={name} icon={icon} last={i === libraryItems.length - 1} />
                    ))}
                  </Branch>
                </li>
              </Branch>
            </TreeArea>
            <ScrollBar>
              <ScrollArrow type="button" aria-label="Scroll left">
                <svg width="16" height="20" viewBox="0 0 16 20" fill="none" stroke="#4d6185" strokeWidth="4" aria-hidden="true"><path d="M12 2L4 10L12 18" /></svg>
              </ScrollArrow>
              <ScrollThumb><ThumbGrip /></ScrollThumb>
              <ScrollGap />
              <ScrollArrow type="button" aria-label="Scroll right">
                <svg width="16" height="20" viewBox="0 0 16 20" fill="none" stroke="#4d6185" strokeWidth="4" aria-hidden="true"><path d="M4 2L12 10L4 18" /></svg>
              </ScrollArrow>
            </ScrollBar>
          </TreePane>

          <ContentPane>
            <IconGrid>
              {projectItems.map(([name, icon], i) => (
                <ProjectItem key={name} type="button" $column={i === 0 ? 1 : i + 2}>
                  {icon}
                  <ItemLabel>{name}</ItemLabel>
                </ProjectItem>
              ))}
            </IconGrid>
          </ContentPane>
        </Panes>

        <StatusBar>
          <StatusPanel>Ready</StatusPanel>
          <StatusPanel $width={140}>10/01/2002</StatusPanel>
          <StatusPanel $width={142}>01:55 م</StatusPanel>
        </StatusBar>

        <DialogLayer>
          <DialogFrame role="dialog" aria-labelledby="dialog-title" onSubmit={(e) => e.preventDefault()}>
            <DialogTitle>
              <DialogHeading id="dialog-title">Save Project As</DialogHeading>
              <CaptionButton $tone="red" type="button" aria-label="Close"><Glyph d={crossPath} width={5} /></CaptionButton>
            </DialogTitle>
            <DialogBody>
              <Fields>
                <label htmlFor="project-name">Project Name:</label>
                <NameField>
                  <NameInput id="project-name" defaultValue="H1007" />
                  <Caret />
                </NameField>
                <WideButton type="button">Change <u>F</u>older...</WideButton>
              </Fields>
              <Actions>
                <PushButton $primary type="submit">Save</PushButton>
                <PushButton type="button">Cancel</PushButton>
                <PushButton type="button"><u>H</u>elp</PushButton>
              </Actions>
              <FolderGroup>
                <FolderLegend>Folder:</FolderLegend>
                <FolderPath>D:\E20-II\Projects\H1007</FolderPath>
              </FolderGroup>
            </DialogBody>
          </DialogFrame>
        </DialogLayer>
      </AppWindow>

      <TaskBar>
        <StartButton type="button"><FlagLogo />start</StartButton>
        <Tasks>
          {tasks.map(([name, icon]) => <TaskButton key={name} type="button">{icon}{name}</TaskButton>)}
        </Tasks>
        <Language type="button">EN</Language>
        <Tray>
          <TrayToggle type="button" aria-label="Show hidden icons"><ChevronBadge /></TrayToggle>
          <GlobeBadge />
          <SpeakerBadge />
          <Clock>01:55 م</Clock>
        </Tray>
      </TaskBar>
    </Screen>
  );
}
